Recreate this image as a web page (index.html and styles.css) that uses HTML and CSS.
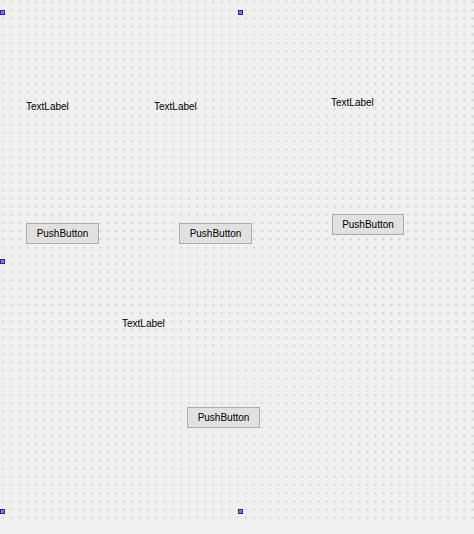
FILE: index.html
```html
<!DOCTYPE html>
<html>
<head>
<meta charset="utf-8">
<link rel="stylesheet" href="styles.css">
</head>
<body>
<div class="form">
  <div class="grid"></div>
  <span class="label l1">TextLabel</span>
  <span class="label l2">TextLabel</span>
  <span class="label l3">TextLabel</span>
  <span class="label l4">TextLabel</span>
  <button class="btn b1">PushButton</button>
  <button class="btn b2">PushButton</button>
  <button class="btn b3">PushButton</button>
  <button class="btn b4">PushButton</button>
  <span class="handle h1"></span>
  <span class="handle h2"></span>
  <span class="handle h3"></span>
  <span class="handle h4"></span>
  <span class="handle h5"></span>
</div>
</body>
</html>
```
FILE: styles.css
```css
html, body {
  margin: 0;
  padding: 0;
  background: #f0f0f0;
  width: 474px;
  height: 534px;
  overflow: hidden;
  font-family: "Liberation Sans", Arial, sans-serif;
}
.form {
  position: relative;
  width: 474px;
  height: 534px;
}
.grid {
  position: absolute;
  left: 0;
  top: 0;
  width: 474px;
  height: 520px;
  background-color: #f0f0f0;
  background-image: radial-gradient(circle at 4px 4px, #c8c8c8 0.7px, rgba(200,200,200,0) 1.2px);
  background-size: 8.1px 8.2px;
  background-position: -1px -2px;
}
.label {
  position: absolute;
  font-size: 10px;
  color: #000;
  line-height: 12px;
}
.l1 { left: 26px; top: 101px; }
.l2 { left: 154px; top: 101px; }
.l3 { left: 331px; top: 97px; }
.l4 { left: 122px; top: 318px; }
.btn {
  position: absolute;
  width: 73px;
  height: 21px;
  padding: 0;
  margin: 0;
  border: 1px solid #adadad;
  background: #e1e1e1;
  font-family: "Liberation Sans", Arial, sans-serif;
  font-size: 10px;
  color: #000;
  line-height: 19px;
  text-align: center;
}
.b1 { left: 26px; top: 223px; }
.b2 { left: 179px; top: 223px; }
.b3 { left: 332px; top: 214px; width: 72px; }
.b4 { left: 187px; top: 407px; }
.handle {
  position: absolute;
  width: 3px;
  height: 3px;
  border: 1px solid #2a2aa0;
  background: #7a7ae6;
}
.h1 { left: 0px; top: 10px; }
.h2 { left: 238px; top: 10px; }
.h3 { left: 0px; top: 259px; }
.h4 { left: 0px; top: 509px; }
.h5 { left: 238px; top: 509px; }
```
